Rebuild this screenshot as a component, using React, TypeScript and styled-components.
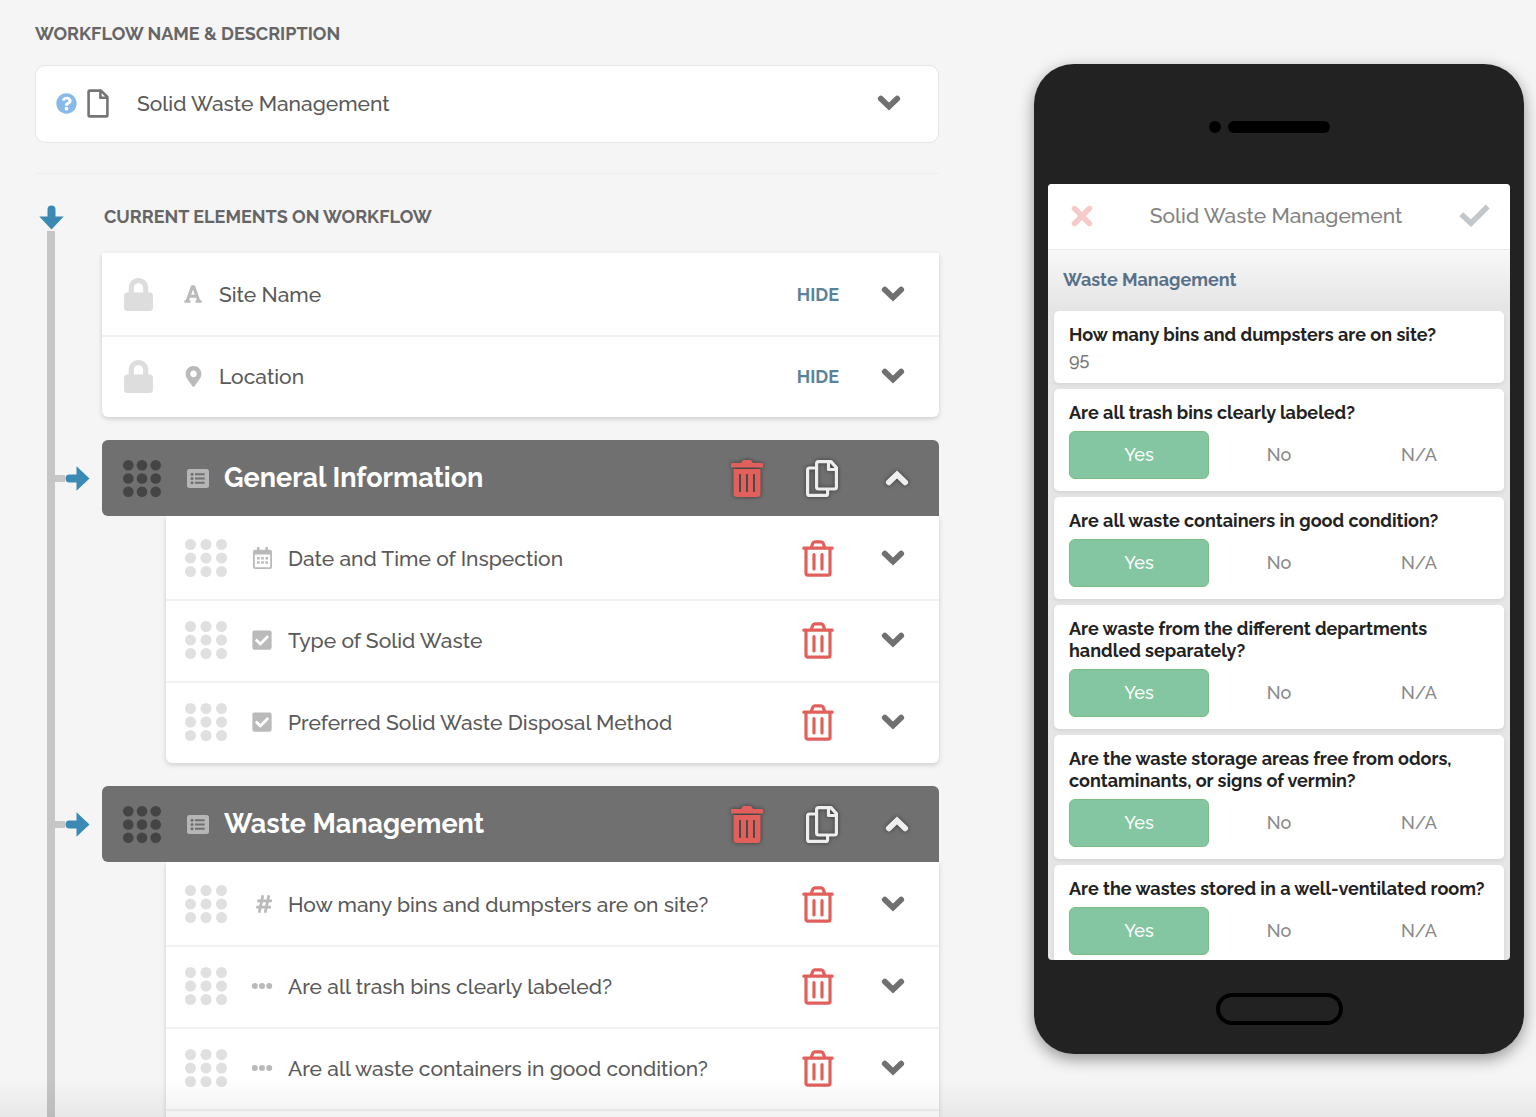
import React from "react";
import styled, { createGlobalStyle, css } from "styled-components";
import { FaQuestionCircle, FaLock, FaFont, FaMapMarkerAlt, FaCheckSquare } from "react-icons/fa";

const GlobalStyle = createGlobalStyle`
  *, *::before, *::after { box-sizing: border-box; }
  body {
    margin: 0;
    background: #f5f5f5;
    color: #595959;
    font-family: Raleway, Lato, "Liberation Sans", sans-serif;
    font-size: 21px;
    font-weight: 500;
  }
  h1, h2, h3, p, ul { margin: 0; padding: 0; }
  ul { list-style: none; }
  button { font: inherit; color: inherit; background: none; border: 0; padding: 0; cursor: pointer; }
  svg { display: block; flex: none; }
`;

const Page = styled.main`
  display: flex;
  align-items: flex-start;
  gap: 95px;
  height: 100vh;
  overflow: hidden;
  padding: 0 12px 0 35px;
`;

const Editor = styled.div`
  flex: 1;
  min-width: 0;
  padding-top: 22px;
`;

const Heading = styled.h2`
  font-size: 18px;
  line-height: 24px;
  font-weight: 700;
  text-transform: uppercase;
  color: #666;
`;

const NameCard = styled.section`
  display: flex;
  align-items: center;
  height: 78px;
  margin-top: 19px;
  padding: 0 37px 2px 20px;
  background: #fff;
  border: 1px solid #e6e6e6;
  border-radius: 10px;
`;

const NameText = styled.p`
  flex: 1;
  margin-left: 28px;
`;

const HelpButton = styled.button`
  margin-right: 10px;
  color: #87b9e9;
`;

const Divider = styled.hr`
  height: 1px;
  margin: 30px 0 0;
  border: 0;
  background: #eee;
`;

const Workflow = styled.section`
  display: flex;
  margin-top: 31px;
`;

const Rail = styled.div`
  display: flex;
  flex-direction: column;
  align-items: center;
  width: 32px;
`;

const RailBar = styled.div`
  flex: 1;
  width: 8px;
  margin-top: 1px;
  background: #c6c6c6;
`;

const Elements = styled.div`
  flex: 1;
  min-width: 0;
  margin-left: -12px;
`;

const ElementsHeading = styled(Heading)`
  margin-left: 49px;
`;

const panel = css`
  background: #fff;
  border-radius: 0 0 6px 6px;
  box-shadow: 0 2px 5px rgba(0, 0, 0, 0.16);
`;

const LockedList = styled.ul`
  ${panel}
  margin: 24px 0 0 47px;
`;

const GroupList = styled.ul<{ $continues: boolean }>`
  ${panel}
  margin-left: 111px;
  padding-top: 1px;
  ${(p) => p.$continues && css`
    &::after {
      content: "";
      display: block;
      height: 82px;
      border-top: 2px solid #f1f1f1;
    }
  `}
`;

const Row = styled.li<{ $inset: number }>`
  display: flex;
  align-items: center;
  height: 82px;
  padding: 0 34px 2px ${(p) => p.$inset}px;
  border-top: 2px solid transparent;
  & + & { border-color: #f1f1f1; }
`;

const TypeSlot = styled.span<{ $left: number; $right: number }>`
  display: flex;
  justify-content: center;
  flex: none;
  width: 22px;
  margin: 0 ${(p) => p.$right}px 0 ${(p) => p.$left}px;
  color: #bababa;
`;

const Label = styled.span`
  flex: 1;
  white-space: nowrap;
`;

const HideButton = styled.button`
  margin-right: 42px;
  font-size: 18px;
  font-weight: 700;
  color: #5a839b;
`;

const ToggleButton = styled.button`
  color: #707070;
`;

const DeleteButton = styled.button`
  margin-right: 47px;
  color: #e2605c;
`;

const GroupRow = styled.header`
  display: flex;
  align-items: center;
  margin-top: 23px;
`;

const Connector = styled.div`
  display: flex;
  align-items: center;
  flex: none;
  width: 47px;
  &::before { content: ""; width: 10px; height: 7px; background: #c6c6c6; }
`;

const GroupBar = styled.div`
  display: flex;
  align-items: center;
  flex: 1;
  height: 76px;
  padding: 0 30px 0 21px;
  background: #707070;
  border-radius: 6px 6px 0 6px;
  color: #eee;
  svg { overflow: visible; }
`;

const GroupTitle = styled.h3`
  flex: 1;
  font-size: 27px;
  line-height: 32px;
  font-weight: 700;
  color: #fff;
`;

const BarButton = styled.button<{ $gap: number; $danger?: boolean }>`
  margin-left: ${(p) => p.$gap}px;
  color: ${(p) => (p.$danger ? "#e2605c" : "#eee")};
  filter: drop-shadow(0 0 2px rgba(0, 0, 0, 0.5));
`;

const BottomFade = styled.div`
  position: fixed;
  inset: auto 0 0 0;
  height: 40px;
  pointer-events: none;
  background: linear-gradient(rgba(0, 0, 0, 0), rgba(0, 0, 0, 0.05));
`;

const Phone = styled.aside`
  flex: none;
  width: 490px;
  margin-top: 64px;
  padding: 0 14px;
  background: #222;
  border-radius: 40px;
  box-shadow: 0 5px 16px rgba(0, 0, 0, 0.4);
`;

const Speaker = styled.div`
  display: grid;
  grid-template-columns: 1fr 102px 1fr;
  align-items: center;
  column-gap: 7px;
  height: 120px;
  padding-top: 6px;
  &::before { content: ""; justify-self: end; width: 12px; height: 12px; border-radius: 6px; background: #000; }
  &::after { content: ""; height: 12px; border-radius: 6px; background: #000; }
`;

const Screen = styled.div`
  height: 776px;
  overflow: hidden;
  border-radius: 4px;
  background: #e6e6e6;
`;

const ScreenBar = styled.header`
  display: flex;
  align-items: center;
  justify-content: space-between;
  height: 66px;
  padding: 0 20px 2px 23px;
  background: #fff;
  border-bottom: 1px solid #e9e9e9;
  color: #828282;
`;

const ScreenTitle = styled.h2`
  font-size: 21px;
  font-weight: 500;
`;

const SectionTitle = styled.h3`
  height: 61px;
  padding: 19px 15px;
  background: linear-gradient(#f8f8f8, #e4e4e4);
  font-size: 18px;
  line-height: 22px;
  font-weight: 700;
  color: #58718a;
`;

const Cards = styled.div`
  display: flex;
  flex-direction: column;
  gap: 6px;
  padding: 0 6px;
`;

const Card = styled.section`
  flex: none;
  padding: 13px 15px 12px;
  background: #fff;
  border-radius: 5px;
  box-shadow: 0 2px 4px rgba(0, 0, 0, 0.08);
`;

const Question = styled.h4`
  margin: 0;
  font-size: 18px;
  line-height: 22px;
  font-weight: 700;
  color: #222;
`;

const Value = styled.p`
  margin-top: 3px;
  font-size: 18px;
  line-height: 22px;
  color: #777;
`;

const Answers = styled.div`
  display: grid;
  grid-template-columns: repeat(3, 1fr);
  height: 48px;
  margin-top: 7px;
`;

const Answer = styled.button`
  border: 1px solid transparent;
  border-radius: 6px;
  font-size: 18px;
  line-height: 22px;
  color: #8a8a8a;
  &[aria-pressed="true"] { background: #84c6a1; border-color: #79bd83; color: #fff; }
`;

const HomeArea = styled.div`
  display: flex;
  justify-content: center;
  height: 94px;
  padding-top: 33px;
`;

const HomeButton = styled.button`
  width: 127px;
  height: 32px;
  border: 4px solid #000;
  border-radius: 16px;
`;

const Chevron = ({ up }: { up?: boolean }) => (
  <svg width="24" height="16" viewBox="0 0 24 16" fill="none" stroke="currentColor" strokeWidth="5.8" strokeLinecap="round">
    <path d={up ? "M3.800 12.300 12 4.500l8.200 7.800" : "M3.800 3.700 12 11.500l8.200-7.800"} />
  </svg>
);

const Dots = ({ w, h, r, color }: { w: number; h: number; r: number; color: string }) => (
  <svg width={w} height={h} fill={color}>
    {[0, 1, 2].map((y) =>
      [0, 1, 2].map((x) => <circle key={`${x}${y}`} cx={r + (x * (w - 2 * r)) / 2} cy={r + (y * (h - 2 * r)) / 2} r={r} />)
    )}
  </svg>
);

const Arrow = ({ down }: { down?: boolean }) => (
  <svg width="25" height="25" viewBox="0 0 25 25" fill="#3b8ab3">
    <path transform={down ? "rotate(90 12.5 12.5)" : undefined} d="M4.5 8.5H11.5V.3L24.5 12.5 11.5 24.7V16.5H4.5A4 4 0 0 1 4.5 8.5Z" />
  </svg>
);

const PageIcon = () => (
  <svg width="22" height="29" viewBox="0 0 22 29" fill="none" stroke="#757575" strokeWidth="2.6" strokeLinejoin="round">
    <path d="M1.6 2.6a1 1 0 0 1 1-1H14l6.4 6.4v18.400a1 1 0 0 1-1 1H2.600a1 1 0 0 1-1-1Z" />
    <path d="M13.400 1.600v7.200h7" />
  </svg>
);

const TrashOutline = () => (
  <svg width="32" height="37" viewBox="0 0 32 37" fill="none" stroke="currentColor" strokeWidth="3.200" strokeLinecap="round" strokeLinejoin="round">
    <path d="M1.800 8.200h28.400M9.200 7.500l1.700-4.300a2 2 0 0 1 1.900-1.400h6.400a2 2 0 0 1 1.900 1.400l1.700 4.300M4 8.500v25a1.700 1.700 0 0 0 1.700 1.700h20.600a1.700 1.700 0 0 0 1.700-1.700v-25" />
    <path d="M12 14.600v14.400M20 14.600v14.400" />
  </svg>
);

const TrashSolid = () => (
  <svg width="32" height="37" viewBox="0 0 32 37" fill="currentColor">
    <path d="M1 3h9l1.500-2.300Q12 0 12.800 0h6.400q.8 0 1.300.7L22 3h9a1 1 0 0 1 1 1v3.500H0V4a1 1 0 0 1 1-1Z" />
    <path fillRule="evenodd" d="M2.500 9h27v24.500a3.500 3.500 0 0 1-3.500 3.500H6a3.500 3.500 0 0 1-3.500-3.500ZM8 15v16q0 1 1 1t1-1V15q0-1-1-1t-1 1Zm7 0v16q0 1 1 1t1-1V15q0-1-1-1t-1 1Zm7 0v16q0 1 1 1t1-1V15q0-1-1-1t-1 1Z" />
  </svg>
);

const CopyIcon = () => (
  <svg width="32" height="37" viewBox="0 0 32 37" fill="none" stroke="currentColor" strokeWidth="3.200" strokeLinejoin="round">
    <path d="M10.500 8H3.600a2 2 0 0 0-2 2v23.400a2 2 0 0 0 2 2h16a2 2 0 0 0 2-2V29" />
    <path d="M10.600 3.600a2 2 0 0 1 2-2H25l5.400 6V27a2 2 0 0 1-2 2H12.600a2 2 0 0 1-2-2Z" />
    <path d="M22.500 2v7.500H30" />
  </svg>
);

const ListIcon = () => (
  <svg width="22" height="19" viewBox="0 0 22 19">
    <rect width="22" height="19" rx="2.500" fill="#b6b6b6" />
    <path d="M8 5.200h9.700M8 9.500h9.700M8 13.800h9.700" stroke="#707070" strokeWidth="2" />
    <g fill="#707070"><circle cx="5" cy="5.200" r="1.500" /><circle cx="5" cy="9.500" r="1.500" /><circle cx="5" cy="13.800" r="1.500" /></g>
  </svg>
);

const CalendarIcon = () => (
  <svg width="19" height="22" viewBox="0 0 19 22" fill="currentColor">
    <path fillRule="evenodd" d="M2 2.700h2V.8a.8.8 0 0 1 .8-.8h1a.8.8 0 0 1 .8.800v1.900h5.800V.8a.8.8 0 0 1 .8-.8h1a.8.8 0 0 1 .8.800v1.900h2a2 2 0 0 1 2 2V20a2 2 0 0 1-2 2H2a2 2 0 0 1-2-2V4.700a2 2 0 0 1 2-2ZM1.800 7.500v12.300q0 .4.400.4h14.600q.4 0 .4-.4V7.500Z" />
    <path d="M4 10h2.600v2.600H4zM8.200 10h2.600v2.600H8.200zM12.400 10H15v2.600h-2.600zM4 14.200h2.600v2.600H4zM8.200 14.200h2.600v2.600H8.200zM12.400 14.200H15v2.600h-2.600z" />
  </svg>
);

const HashIcon = () => (
  <svg width="22" height="18" viewBox="0 0 22 18" fill="none" stroke="currentColor" strokeWidth="2.800">
    <path d="M11.800.3 8.200 17.700M17.800.3 14.200 17.700M6.200 5.800H21M5.200 12.200H20" />
  </svg>
);

const EllipsisIcon = () => (
  <svg width="22" height="7" fill="currentColor"><circle cx="3.800" cy="3" r="3" /><circle cx="11" cy="3" r="3" /><circle cx="18.200" cy="3" r="3" /></svg>
);

const CrossIcon = () => (
  <svg width="22" height="22" viewBox="0 0 22 22" stroke="#f5cbc9" strokeWidth="5.600" strokeLinecap="round"><path d="M3.600 3.600l14.800 14.800M18.400 3.600 3.600 18.400" /></svg>
);

const TickIcon = () => (
  <svg width="31" height="24" viewBox="0 0 31 24" fill="none" stroke="#c2c7cc" strokeWidth="5.600"><path d="M2.300 10.200 12 19.200 28.700 2.600" /></svg>
);

const groups = [
  {
    title: "General Information",
    continues: false,
    items: [
      { icon: <CalendarIcon />, label: "Date and Time of Inspection" },
      { icon: <FaCheckSquare size={22} />, label: "Type of Solid Waste" },
      { icon: <FaCheckSquare size={22} />, label: "Preferred Solid Waste Disposal Method" },
    ],
  },
  {
    title: "Waste Management",
    continues: true,
    items: [
      { icon: <HashIcon />, label: "How many bins and dumpsters are on site?" },
      { icon: <EllipsisIcon />, label: "Are all trash bins clearly labeled?" },
      { icon: <EllipsisIcon />, label: "Are all waste containers in good condition?" },
    ],
  },
];

const locked = [
  { icon: <FaFont size={20} />, label: "Site Name" },
  { icon: <FaMapMarkerAlt size={21} />, label: "Location" },
];

const questions = [
  "Are all trash bins clearly labeled?",
  "Are all waste containers in good condition?",
  "Are waste from the different departments handled separately?",
  "Are the waste storage areas free from odors, contaminants, or signs of vermin?",
  "Are the wastes stored in a well-ventilated room?",
];

export default function App() {
  return (
    <>
      <GlobalStyle />
      <Page>
        <Editor>
          <Heading>Workflow name &amp; description</Heading>
          <NameCard>
            <HelpButton aria-label="Help"><FaQuestionCircle size={21} /></HelpButton>
            <PageIcon />
            <NameText>Solid Waste Management</NameText>
            <ToggleButton aria-label="Expand"><Chevron /></ToggleButton>
          </NameCard>
          <Divider />
          <Workflow>
            <Rail>
              <Arrow down />
              <RailBar />
            </Rail>
            <Elements>
              <ElementsHeading>Current elements on workflow</ElementsHeading>
              <LockedList>
                {locked.map((item) => (
                  <Row key={item.label} $inset={20}>
                    <FaLock size={33} color="#ddd" />
                    <TypeSlot $left={27} $right={15}>{item.icon}</TypeSlot>
                    <Label>{item.label}</Label>
                    <HideButton>HIDE</HideButton>
                    <ToggleButton aria-label="Expand"><Chevron /></ToggleButton>
                  </Row>
                ))}
              </LockedList>
              {groups.map((group) => (
                <React.Fragment key={group.title}>
                  <GroupRow>
                    <Connector><Arrow /></Connector>
                    <GroupBar>
                      <Dots w={38} h={37} r={5.3} color="#444" />
                      <TypeSlot $left={26} $right={15}><ListIcon /></TypeSlot>
                      <GroupTitle>{group.title}</GroupTitle>
                      <BarButton $gap={0} $danger aria-label="Delete section"><TrashSolid /></BarButton>
                      <BarButton $gap={43} aria-label="Copy section"><CopyIcon /></BarButton>
                      <BarButton $gap={47} aria-label="Collapse"><Chevron up /></BarButton>
                    </GroupBar>
                  </GroupRow>
                  <GroupList $continues={group.continues}>
                    {group.items.map((item) => (
                      <Row key={item.label} $inset={19}>
                        <Dots w={42} h={38} r={5.5} color="#e0e0e0" />
                        <TypeSlot $left={24} $right={15}>{item.icon}</TypeSlot>
                        <Label>{item.label}</Label>
                        <DeleteButton aria-label={`Delete ${item.label}`}><TrashOutline /></DeleteButton>
                        <ToggleButton aria-label="Expand"><Chevron /></ToggleButton>
                      </Row>
                    ))}
                  </GroupList>
                </React.Fragment>
              ))}
            </Elements>
          </Workflow>
        </Editor>
        <Phone>
          <Speaker />
          <Screen>
            <ScreenBar>
              <button aria-label="Cancel"><CrossIcon /></button>
              <ScreenTitle>Solid Waste Management</ScreenTitle>
              <button aria-label="Confirm"><TickIcon /></button>
            </ScreenBar>
            <SectionTitle>Waste Management</SectionTitle>
            <Cards>
              <Card>
                <Question>How many bins and dumpsters are on site?</Question>
                <Value>95</Value>
              </Card>
              {questions.map((q) => (
                <Card key={q}>
                  <Question>{q}</Question>
                  <Answers>
                    <Answer aria-pressed="true">Yes</Answer>
                    <Answer aria-pressed="false">No</Answer>
                    <Answer aria-pressed="false">N/A</Answer>
                  </Answers>
                </Card>
              ))}
            </Cards>
          </Screen>
          <HomeArea>
            <HomeButton aria-label="Home" />
          </HomeArea>
        </Phone>
      </Page>
      <BottomFade />
    </>
  );
}
